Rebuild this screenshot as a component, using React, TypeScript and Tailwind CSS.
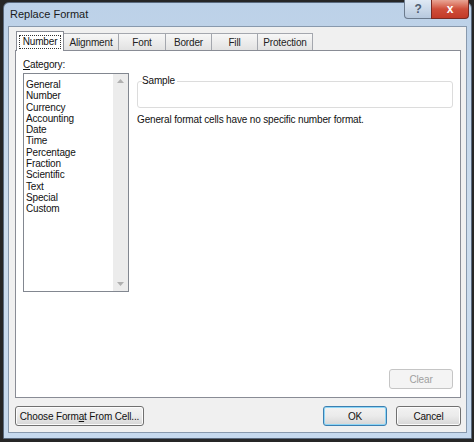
import React from "react";

const font = { fontFamily: '"Liberation Sans", Arial, sans-serif' };

function Tab({ label, w, selected }: { label: string; w: number; selected?: boolean }) {
  if (selected) {
    return (
      <div
        className="relative z-10 -mb-px flex h-[20px] items-center justify-center border border-b-0 border-[#898c95] bg-white"
        style={{ width: w }}
      >
        <span className="border border-dotted border-[#333] px-[3px] leading-[12px]">{label}</span>
      </div>
    );
  }
  return (
    <div
      className="-ml-px flex h-[17px] items-center justify-center border border-b-0 border-[#a4a7ae] bg-gradient-to-b from-[#f7f7f7] to-[#e2e2e2] text-[#222]"
      style={{ width: w }}
    >
      {label}
    </div>
  );
}

function Btn({ children, w, disabled, def }: { children: React.ReactNode; w: number; disabled?: boolean; def?: boolean }) {
  return (
    <div
      className={
        "flex h-[20px] items-center justify-center whitespace-nowrap rounded-[3px] border " +
        (disabled
          ? "border-[#c5c5c5] bg-[#f4f4f4] text-[#a0a0a0]"
          : def
          ? "border-[#3c7fb1] bg-gradient-to-b from-[#f2f2f2] via-[#ebebeb] to-[#d6d6d6] text-[#111] shadow-[inset_0_0_0_1px_#8ed6f6]"
          : "border-[#707070] bg-gradient-to-b from-[#f2f2f2] via-[#ebebeb] to-[#d6d6d6] text-[#111] shadow-[inset_0_0_0_1px_#fcfcfc]")
      }
      style={{ width: w }}
    >
      {children}
    </div>
  );
}

export default function App() {
  const cats = ["General", "Number", "Currency", "Accounting", "Date", "Time", "Percentage", "Fraction", "Scientific", "Text", "Special", "Custom"];
  return (
    <div
      className="relative h-[442px] w-[474px] overflow-hidden bg-[#262626] pl-[3px] pr-[2px] pt-[2px] text-[10px] tracking-[-0.15px] text-[#111]"
      style={font}
    >
      <div className="flex h-[437px] flex-col rounded-t-[6px] border border-[#5a6a7e] bg-gradient-to-b from-[#bcd1e8] via-[#cddded] to-[#c6d9ee]">
        {/* title bar */}
        <div className="flex h-[27px] items-center pl-[6px] text-[11px] tracking-normal text-[#1a1a1a]">Replace Format</div>
        {/* caption buttons */}
        <div className="absolute right-[5px] top-0 flex h-[19px]">
          <div className="flex h-[19px] w-[28px] items-center justify-center rounded-bl-[4px] border border-t-0 border-[#6b7a8d] bg-gradient-to-b from-[#dfe9f4] to-[#b7c9de] text-[12px] font-bold text-[#4e5d70]">
            ?
          </div>
          <div className="-ml-px flex h-[19px] w-[38px] items-center justify-center rounded-br-[4px] border border-t-0 border-[#7a2a22] bg-gradient-to-b from-[#e8a595] via-[#cf4e3a] to-[#c23a28] text-[12px] font-bold text-white">
            x
          </div>
        </div>
        {/* client */}
        <div className="mx-[4px] mb-[5px] flex flex-1 flex-col border border-[#8899ad] bg-[#f0f0f0] pb-[6px] pl-[6px] pr-[5px] pt-[3px]">
          {/* tabs */}
          <div className="flex h-[20px] items-end pl-[1px]">
            <Tab label="Number" w={48} selected />
            <Tab label="Alignment" w={56} />
            <Tab label="Font" w={48} />
            <Tab label="Border" w={47} />
            <Tab label="Fill" w={47} />
            <Tab label="Protection" w={56} />
          </div>
          {/* panel */}
          <div className="flex h-[348px] flex-col border border-[#898c95] bg-white px-[7px] pb-[8px] pt-[8px]">
            <div className="flex gap-[8px]">
              <div className="flex flex-col">
                <div className="h-[14px] leading-[12px]">
                  <span className="underline">C</span>ategory:
                </div>
                <div className="flex h-[219px] w-[106px] border border-[#828790]">
                  <div className="flex-1 pl-[2px] pt-[5px] leading-[11.3px]">
                    {cats.map((c) => (
                      <div key={c}>{c}</div>
                    ))}
                  </div>
                  <div className="flex w-[15px] flex-col items-center justify-between bg-[#ececec] py-[5px]">
                    <svg width="7" height="4" viewBox="0 0 7 4"><path d="M0 4 L3.5 0 L7 4 Z" fill="#b0b0b0" /></svg>
                    <svg width="7" height="4" viewBox="0 0 7 4"><path d="M0 0 L3.5 4 L7 0 Z" fill="#b0b0b0" /></svg>
                  </div>
                </div>
              </div>
              <div className="flex flex-1 flex-col pt-[22px]">
                <div className="relative h-[27px] rounded-[3px] border border-[#dcdcdc]">
                  <span className="absolute -top-[7px] left-[4px] bg-white pr-[2px] leading-[12px]">Sample</span>
                </div>
                <div className="mt-[6px] leading-[12px]">General format cells have no specific number format.</div>
              </div>
            </div>
            <div className="mt-auto flex justify-end">
              <Btn w={64} disabled>
                Clear
              </Btn>
            </div>
          </div>
          {/* bottom buttons */}
          <div className="mt-[8px] flex items-center">
            <Btn w={129}>
              <span>
                Choose Form<span className="underline">a</span>t From Cell...
              </span>
            </Btn>
            <div className="flex-1" />
            <Btn w={64} def>
              OK
            </Btn>
            <div className="w-[9px]" />
            <Btn w={65}>Cancel</Btn>
          </div>
        </div>
      </div>
    </div>
  );
}
